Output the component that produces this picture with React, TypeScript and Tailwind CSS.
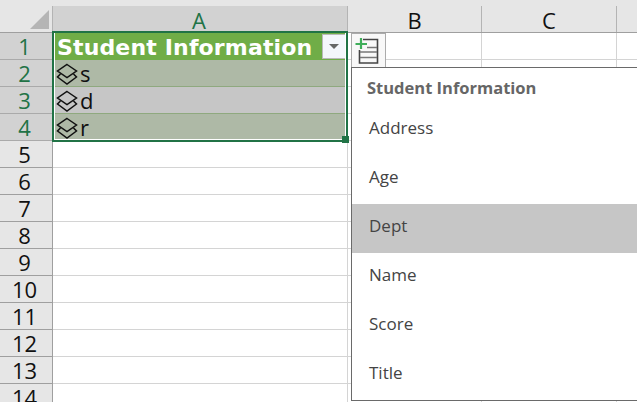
const rows = [1, 2, 3, 4, 5, 6, 7, 8, 9, 10, 11, 12, 13, 14];
const fields = ["Address", "Age", "Dept", "Name", "Score", "Title"];

function LayersIcon() {
  return (
    <svg width="22" height="22" viewBox="0 0 22 22" fill="none" stroke="#111" strokeWidth="1.5" className="mt-[1px] shrink-0">
      <path d="M11 1.5 L20.5 8 L11 14.5 L1.5 8 Z" />
      <path d="M4.5 11 L1.5 14 L11 21 L20.5 14 L17.5 11" />
    </svg>
  );
}

function RowHead({ n }: { n: number }) {
  const active = n <= 4;
  return (
    <div
      className={`flex h-[27px] w-[53px] shrink-0 items-center justify-center border-r border-b pr-[3px] pb-[1px] text-[22px] leading-none ${
        active
          ? "border-r-[#9f9f9f] border-b-[#aaaaaa] bg-[#d2d2d2] text-[#217346]"
          : "border-r-[#9f9f9f] border-b-[#9f9f9f] bg-[#e6e6e6] text-[#111]"
      }`}
    >
      {n}
    </div>
  );
}

function CellA({ n }: { n: number }) {
  if (n === 1) {
    return (
      <div className="flex h-[27px] w-[295px] shrink-0 items-center justify-between bg-[#70ad47] pr-[2px] pl-[4px]">
        <span className="pt-[3px] font-['DejaVu_Sans'] text-[22px] leading-none font-bold tracking-[0.15px] text-white">
          Student Information
        </span>
        <span className="flex h-[25px] w-[24px] items-center justify-center border border-[#b9b9b9] bg-[#f4f6fb]">
          <span className="h-0 w-0 border-x-[5px] border-t-[5px] border-x-transparent border-t-[#666]" />
        </span>
      </div>
    );
  }
  if (n <= 4) {
    return (
      <div
        className={`flex h-[27px] w-[295px] shrink-0 items-center gap-[2px] border-b border-b-[#8fa97f] pl-[3px] text-[22px] leading-none text-[#111] ${
          n === 3 ? "bg-[#c6c6c6]" : "bg-[#aeb9a6]"
        }`}
      >
        <LayersIcon />
        <span className="pb-[1px]">{n === 2 ? "s" : n === 3 ? "d" : "r"}</span>
      </div>
    );
  }
  return <div className="h-[27px] w-[295px] shrink-0 border-r border-b border-[#d4d4d4]" />;
}

export default function App() {
  return (
    <div className="relative h-[402px] w-[640px] overflow-hidden bg-white font-['Open_Sans',sans-serif]">
      <div className="w-[637px] overflow-hidden">
        <div className="flex h-[33px] border-b border-[#9f9f9f] bg-[#e6e6e6] pt-[6px]">
          <div className="relative w-[53px] shrink-0 border-r border-[#b4b4b4]">
            <div className="absolute right-[3px] bottom-[3px] h-0 w-0 border-b-[19px] border-l-[19px] border-b-[#b5b5b5] border-l-transparent" />
          </div>
          <div className="flex w-[295px] shrink-0 items-center justify-center border-r border-[#b4b4b4] bg-[#d2d2d2] pt-[3px] pr-[2px] text-[22px] text-[#217346]">
            A
          </div>
          <div className="flex w-[134px] shrink-0 items-center justify-center border-r border-[#b4b4b4] pt-[3px] text-[22px] text-[#111]">
            B
          </div>
          <div className="flex w-[135px] shrink-0 items-center justify-center border-r border-[#b4b4b4] pt-[3px] text-[22px] text-[#111]">
            C
          </div>
        </div>
        {rows.map((n) => (
          <div key={n} className="flex">
            <RowHead n={n} />
            <CellA n={n} />
            <div className="h-[27px] w-[134px] shrink-0 border-r border-b border-[#d4d4d4]" />
            <div className="h-[27px] w-[135px] shrink-0 border-r border-b border-[#d4d4d4]" />
            <div className="h-[27px] w-[40px] shrink-0 border-b border-[#d4d4d4]" />
          </div>
        ))}
      </div>

      {/* selection box */}
      <div className="absolute top-[31px] left-[52px] h-[111px] w-[296px] border-2 border-[#217346]">
        <div className="absolute inset-0 border-x border-b border-white" />
        <div className="absolute -right-[3px] -bottom-[3px] h-[7px] w-[7px] bg-[#217346]" />
      </div>

      {/* quick-analysis button */}
      <div className="absolute top-[33px] left-[351px] h-[35px] w-[35px] border border-[#ababab] bg-[#f8f8f8]">
        <svg width="33" height="33" viewBox="0 0 33 33" fill="none">
          <path d="M11 5.5 H25.5 V29 H7.5 V16" stroke="#444" strokeWidth="1.6" />
          <path d="M15 13.5 H25 M8 18 H25 M8 23.5 H25" stroke="#777" strokeWidth="1.3" />
          <path d="M9 4 V15 M3.5 10 H15" stroke="#3fae5a" strokeWidth="2.2" />
        </svg>
      </div>

      {/* field menu */}
      <div className="absolute top-[67px] left-[351px] h-[334px] w-[286px] border-y border-l border-[#6a6a6a] bg-white">
        <div className="flex h-[38px] items-center pt-[2px] pl-[15px] text-[16.5px] font-bold text-[#666]">
          Student Information
        </div>
        {fields.map((f, i) => (
          <div
            key={f}
            className={`flex h-[49px] items-center pb-[6px] pl-[17px] text-[17px] text-[#444] ${
              i === 2 ? "bg-[#c6c6c6]" : ""
            }`}
          >
            {f}
          </div>
        ))}
      </div>
    </div>
  );
}
